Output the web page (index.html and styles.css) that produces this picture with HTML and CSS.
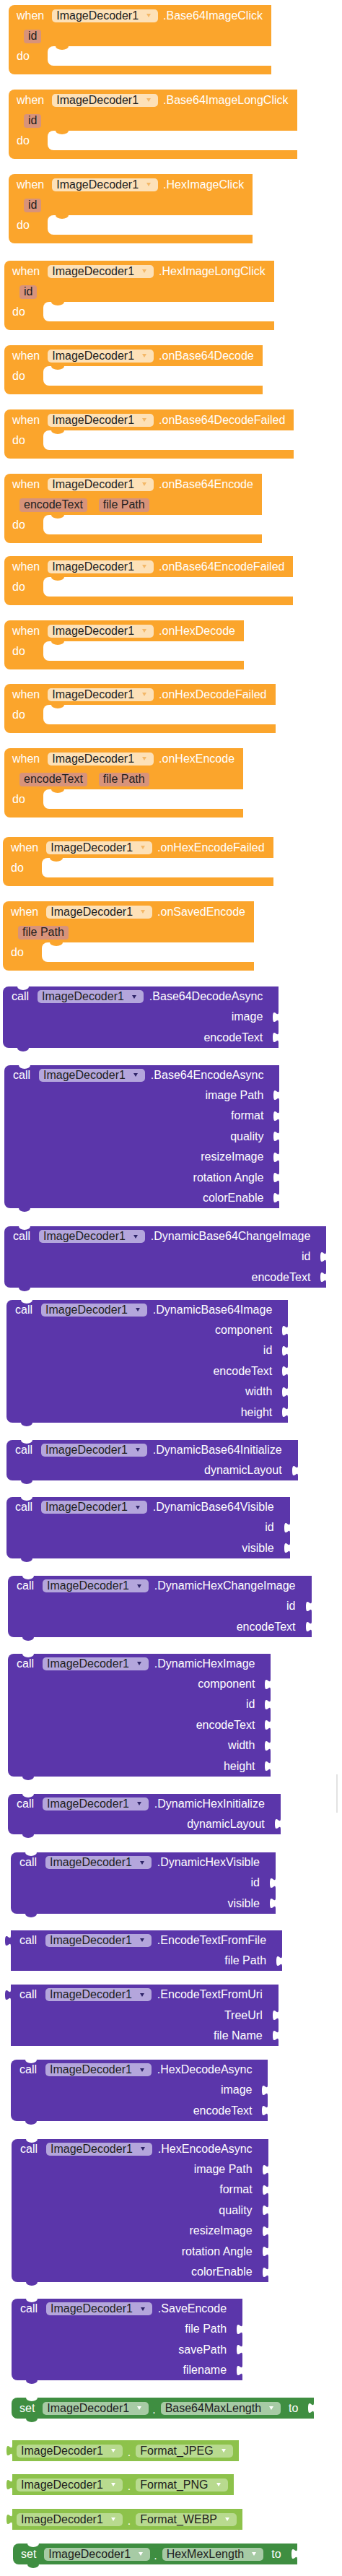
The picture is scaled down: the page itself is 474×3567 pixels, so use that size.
FILE: index.html
```html
<!DOCTYPE html>
<html lang="en">

<head>
    <meta name="viewport" content="width=device-width, initial-scale=1">
    <link rel="stylesheet" href="styles.css">
</head>

<body>

    <!-- shared puzzle tab shape for sockets and output plugs -->
    <svg class="defs" width="0" height="0">
        <defs>
            <path id="tab" d="M8,5 c0,10 -8,-8 -8,7.5 s8,-2.5 8,7.5 Z" />
        </defs>
    </svg>

    <!-- leftover workspace scrollbar sliver -->
    <div class="scroll-mark"></div>

    <div class="workspace">

        <!-- Event blocks -->
        <div class="block event x12">
            <div class="head">
                <div class="row"><span class="kw">when</span><span class="dd">ImageDecoder1</span><span class="name">.Base64ImageClick</span></div>
                <div class="params"><span class="param">id</span></div>
            </div>
            <div class="do-row"><span class="kw">do</span><div class="slot"></div></div>
            <div class="foot"></div>
        </div>

        <div class="block event x12">
            <div class="head">
                <div class="row"><span class="kw">when</span><span class="dd">ImageDecoder1</span><span class="name">.Base64ImageLongClick</span></div>
                <div class="params"><span class="param">id</span></div>
            </div>
            <div class="do-row"><span class="kw">do</span><div class="slot"></div></div>
            <div class="foot"></div>
        </div>

        <div class="block event x12">
            <div class="head">
                <div class="row"><span class="kw">when</span><span class="dd">ImageDecoder1</span><span class="name">.HexImageClick</span></div>
                <div class="params"><span class="param">id</span></div>
            </div>
            <div class="do-row"><span class="kw">do</span><div class="slot"></div></div>
            <div class="foot"></div>
        </div>

        <div class="block event x6 g24">
            <div class="head">
                <div class="row"><span class="kw">when</span><span class="dd">ImageDecoder1</span><span class="name">.HexImageLongClick</span></div>
                <div class="params"><span class="param">id</span></div>
            </div>
            <div class="do-row"><span class="kw">do</span><div class="slot"></div></div>
            <div class="foot"></div>
        </div>

        <div class="block event x6">
            <div class="head">
                <div class="row"><span class="kw">when</span><span class="dd">ImageDecoder1</span><span class="name">.onBase64Decode</span></div>
            </div>
            <div class="do-row"><span class="kw">do</span><div class="slot"></div></div>
            <div class="foot"></div>
        </div>

        <div class="block event x6">
            <div class="head">
                <div class="row"><span class="kw">when</span><span class="dd">ImageDecoder1</span><span class="name">.onBase64DecodeFailed</span></div>
            </div>
            <div class="do-row"><span class="kw">do</span><div class="slot"></div></div>
            <div class="foot"></div>
        </div>

        <div class="block event x6">
            <div class="head">
                <div class="row"><span class="kw">when</span><span class="dd">ImageDecoder1</span><span class="name">.onBase64Encode</span></div>
                <div class="params"><span class="param">encodeText</span><span class="param">file Path</span></div>
            </div>
            <div class="do-row"><span class="kw">do</span><div class="slot"></div></div>
            <div class="foot"></div>
        </div>

        <div class="block event x6 g18">
            <div class="head">
                <div class="row"><span class="kw">when</span><span class="dd">ImageDecoder1</span><span class="name">.onBase64EncodeFailed</span></div>
            </div>
            <div class="do-row"><span class="kw">do</span><div class="slot"></div></div>
            <div class="foot"></div>
        </div>

        <div class="block event x6">
            <div class="head">
                <div class="row"><span class="kw">when</span><span class="dd">ImageDecoder1</span><span class="name">.onHexDecode</span></div>
            </div>
            <div class="do-row"><span class="kw">do</span><div class="slot"></div></div>
            <div class="foot"></div>
        </div>

        <div class="block event x6 g20">
            <div class="head">
                <div class="row"><span class="kw">when</span><span class="dd">ImageDecoder1</span><span class="name">.onHexDecodeFailed</span></div>
            </div>
            <div class="do-row"><span class="kw">do</span><div class="slot"></div></div>
            <div class="foot"></div>
        </div>

        <div class="block event x6">
            <div class="head">
                <div class="row"><span class="kw">when</span><span class="dd">ImageDecoder1</span><span class="name">.onHexEncode</span></div>
                <div class="params"><span class="param">encodeText</span><span class="param">file Path</span></div>
            </div>
            <div class="do-row"><span class="kw">do</span><div class="slot"></div></div>
            <div class="foot"></div>
        </div>

        <div class="block event x4 g27">
            <div class="head">
                <div class="row"><span class="kw">when</span><span class="dd">ImageDecoder1</span><span class="name">.onHexEncodeFailed</span></div>
            </div>
            <div class="do-row"><span class="kw">do</span><div class="slot"></div></div>
            <div class="foot"></div>
        </div>

        <div class="block event x4">
            <div class="head">
                <div class="row"><span class="kw">when</span><span class="dd">ImageDecoder1</span><span class="name">.onSavedEncode</span></div>
                <div class="params"><span class="param">file Path</span></div>
            </div>
            <div class="do-row"><span class="kw">do</span><div class="slot"></div></div>
            <div class="foot"></div>
        </div>

        <!-- Method call blocks -->
        <div class="block call x4 g22">
            <div class="row"><span class="kw">call</span><span class="dd">ImageDecoder1</span><span class="name">.Base64DecodeAsync</span></div>
            <div class="input">image<svg class="sock"><use href="#tab" /></svg></div>
            <div class="input">encodeText<svg class="sock"><use href="#tab" /></svg></div>
        </div>

        <div class="block call x6 g24">
            <div class="row"><span class="kw">call</span><span class="dd">ImageDecoder1</span><span class="name">.Base64EncodeAsync</span></div>
            <div class="input">image Path<svg class="sock"><use href="#tab" /></svg></div>
            <div class="input">format<svg class="sock"><use href="#tab" /></svg></div>
            <div class="input">quality<svg class="sock"><use href="#tab" /></svg></div>
            <div class="input">resizeImage<svg class="sock"><use href="#tab" /></svg></div>
            <div class="input">rotation Angle<svg class="sock"><use href="#tab" /></svg></div>
            <div class="input">colorEnable<svg class="sock"><use href="#tab" /></svg></div>
        </div>

        <div class="block call x6 g25">
            <div class="row"><span class="kw">call</span><span class="dd">ImageDecoder1</span><span class="name">.DynamicBase64ChangeImage</span></div>
            <div class="input">id<svg class="sock"><use href="#tab" /></svg></div>
            <div class="input">encodeText<svg class="sock"><use href="#tab" /></svg></div>
        </div>

        <div class="block call x9 g17">
            <div class="row"><span class="kw">call</span><span class="dd">ImageDecoder1</span><span class="name">.DynamicBase64Image</span></div>
            <div class="input">component<svg class="sock"><use href="#tab" /></svg></div>
            <div class="input">id<svg class="sock"><use href="#tab" /></svg></div>
            <div class="input">encodeText<svg class="sock"><use href="#tab" /></svg></div>
            <div class="input">width<svg class="sock"><use href="#tab" /></svg></div>
            <div class="input">height<svg class="sock"><use href="#tab" /></svg></div>
        </div>

        <div class="block call x9 g24">
            <div class="row"><span class="kw">call</span><span class="dd">ImageDecoder1</span><span class="name">.DynamicBase64Initialize</span></div>
            <div class="input">dynamicLayout<svg class="sock"><use href="#tab" /></svg></div>
        </div>

        <div class="block call x9 g23">
            <div class="row"><span class="kw">call</span><span class="dd">ImageDecoder1</span><span class="name">.DynamicBase64Visible</span></div>
            <div class="input">id<svg class="sock"><use href="#tab" /></svg></div>
            <div class="input">visible<svg class="sock"><use href="#tab" /></svg></div>
        </div>

        <div class="block call x11 g24">
            <div class="row"><span class="kw">call</span><span class="dd">ImageDecoder1</span><span class="name">.DynamicHexChangeImage</span></div>
            <div class="input">id<svg class="sock"><use href="#tab" /></svg></div>
            <div class="input">encodeText<svg class="sock"><use href="#tab" /></svg></div>
        </div>

        <div class="block call x11 g23">
            <div class="row"><span class="kw">call</span><span class="dd">ImageDecoder1</span><span class="name">.DynamicHexImage</span></div>
            <div class="input">component<svg class="sock"><use href="#tab" /></svg></div>
            <div class="input">id<svg class="sock"><use href="#tab" /></svg></div>
            <div class="input">encodeText<svg class="sock"><use href="#tab" /></svg></div>
            <div class="input">width<svg class="sock"><use href="#tab" /></svg></div>
            <div class="input">height<svg class="sock"><use href="#tab" /></svg></div>
        </div>

        <div class="block call x11 g24">
            <div class="row"><span class="kw">call</span><span class="dd">ImageDecoder1</span><span class="name">.DynamicHexInitialize</span></div>
            <div class="input">dynamicLayout<svg class="sock"><use href="#tab" /></svg></div>
        </div>

        <div class="block call x15 g25">
            <div class="row"><span class="kw">call</span><span class="dd">ImageDecoder1</span><span class="name">.DynamicHexVisible</span></div>
            <div class="input">id<svg class="sock"><use href="#tab" /></svg></div>
            <div class="input">visible<svg class="sock"><use href="#tab" /></svg></div>
        </div>

        <!-- value returning calls have a plug on the left -->
        <div class="block call value x15 g23">
            <svg class="plug"><use href="#tab" /></svg>
            <div class="row"><span class="kw">call</span><span class="dd">ImageDecoder1</span><span class="name">.EncodeTextFromFile</span></div>
            <div class="input">file Path<svg class="sock"><use href="#tab" /></svg></div>
        </div>

        <div class="block call value x15 g19">
            <svg class="plug"><use href="#tab" /></svg>
            <div class="row"><span class="kw">call</span><span class="dd">ImageDecoder1</span><span class="name">.EncodeTextFromUri</span></div>
            <div class="input">TreeUrl<svg class="sock"><use href="#tab" /></svg></div>
            <div class="input">file Name<svg class="sock"><use href="#tab" /></svg></div>
        </div>

        <div class="block call x15 g19">
            <div class="row"><span class="kw">call</span><span class="dd">ImageDecoder1</span><span class="name">.HexDecodeAsync</span></div>
            <div class="input">image<svg class="sock"><use href="#tab" /></svg></div>
            <div class="input">encodeText<svg class="sock"><use href="#tab" /></svg></div>
        </div>

        <div class="block call x16 g25">
            <div class="row"><span class="kw">call</span><span class="dd">ImageDecoder1</span><span class="name">.HexEncodeAsync</span></div>
            <div class="input">image Path<svg class="sock"><use href="#tab" /></svg></div>
            <div class="input">format<svg class="sock"><use href="#tab" /></svg></div>
            <div class="input">quality<svg class="sock"><use href="#tab" /></svg></div>
            <div class="input">resizeImage<svg class="sock"><use href="#tab" /></svg></div>
            <div class="input">rotation Angle<svg class="sock"><use href="#tab" /></svg></div>
            <div class="input">colorEnable<svg class="sock"><use href="#tab" /></svg></div>
        </div>

        <div class="block call x16 g23">
            <div class="row"><span class="kw">call</span><span class="dd">ImageDecoder1</span><span class="name">.SaveEncode</span></div>
            <div class="input">file Path<svg class="sock"><use href="#tab" /></svg></div>
            <div class="input">savePath<svg class="sock"><use href="#tab" /></svg></div>
            <div class="input">filename<svg class="sock"><use href="#tab" /></svg></div>
        </div>

        <!-- Property setters and getters -->
        <div class="block setter x16 g24">
            <div class="row"><span class="kw">set</span><span class="dd">ImageDecoder1</span><span class="dot">.</span><span class="dd">Base64MaxLength</span><span class="to">to</span><svg class="sock"><use href="#tab" /></svg></div>
        </div>

        <div class="block getter x17 g30">
            <svg class="plug"><use href="#tab" /></svg>
            <div class="row"><span class="dd">ImageDecoder1</span><span class="dot">.</span><span class="dd">Format_JPEG</span></div>
        </div>

        <div class="block getter x17 g18">
            <svg class="plug"><use href="#tab" /></svg>
            <div class="row"><span class="dd">ImageDecoder1</span><span class="dot">.</span><span class="dd">Format_PNG</span></div>
        </div>

        <div class="block getter x17 g19">
            <svg class="plug"><use href="#tab" /></svg>
            <div class="row"><span class="dd">ImageDecoder1</span><span class="dot">.</span><span class="dd">Format_WEBP</span></div>
        </div>

        <div class="block setter x18 g19">
            <div class="row"><span class="kw">set</span><span class="dd">ImageDecoder1</span><span class="dot">.</span><span class="dd">HexMexLength</span><span class="to">to</span><svg class="sock"><use href="#tab" /></svg></div>
        </div>

    </div>

</body>

</html>
```

FILE: styles.css
```css
* {
    box-sizing: border-box;
}

body {
    position: relative;
    margin: 0;
    background-color: #ffffff;
    font-family: "Liberation Sans", Arial, Helvetica, sans-serif;
    font-size: 16px;
    color: #ffffff;
}

.defs {
    position: absolute;
    width: 0;
    height: 0;
}

/* thin grey sliver left over from the workspace scrollbar */
.scroll-mark {
    position: absolute;
    left: 466px;
    top: 2457px;
    width: 2px;
    height: 53px;
    background-color: #e2e2e2;
}

/* Blocks workspace, stacked top to bottom */
.workspace {
    display: flex;
    flex-direction: column;
    align-items: flex-start;
    padding: 7px 0 16px 0;
}

.block {
    position: relative;
    margin-top: 21px;
}

.workspace > .block:first-child {
    margin-top: 0;
}

/* offsets of single blocks on the canvas */
.x4 { margin-left: 4px; }
.x6 { margin-left: 6px; }
.x9 { margin-left: 9px; }
.x11 { margin-left: 11px; }
.x12 { margin-left: 12px; }
.x15 { margin-left: 15px; }
.x16 { margin-left: 16px; }
.x17 { margin-left: 17px; }
.x18 { margin-left: 18px; }

.g17 { margin-top: 17px; }
.g18 { margin-top: 18px; }
.g19 { margin-top: 19px; }
.g20 { margin-top: 20px; }
.g22 { margin-top: 22px; }
.g23 { margin-top: 23px; }
.g24 { margin-top: 24px; }
.g25 { margin-top: 25px; }
.g27 { margin-top: 27px; }
.g30 { margin-top: 30px; }

.row {
    display: flex;
    align-items: center;
    white-space: nowrap;
}

/* Dropdown field */
.dd {
    display: inline-flex;
    align-items: center;
    height: 18px;
    padding: 0 10px 0 6px;
    border-radius: 5px;
    color: #1e1e1e;
}

.dd::after {
    content: "";
    margin-left: 11px;
    border-left: 3.5px solid transparent;
    border-right: 3.5px solid transparent;
    border-top: 5px solid #ffffff;
}

.sock {
    position: absolute;
    right: 0;
    top: calc(50% - 12.5px);
    width: 8px;
    height: 20px;
    fill: #ffffff;
}

.plug {
    position: absolute;
    left: -8px;
    top: 2px;
    width: 8px;
    height: 20px;
}

/* ---------- event handlers ---------- */
.event {
    display: flex;
    flex-direction: column;
}

.event .head {
    background-color: #fba52c;
    border-radius: 8px 0 0 0;
    padding-right: 12px;
}

.event .row {
    height: 29px;
    padding-left: 11px;
}

.event .kw {
    margin-right: 11px;
}

.event .dd {
    background-color: #fde1b8;
}

.event .dd::after {
    border-top-color: #f4b868;
}

.event .name {
    margin-left: 7px;
}

.params {
    display: flex;
    align-items: center;
    gap: 16px;
    height: 28px;
    padding-left: 21px;
}

.param {
    display: inline-flex;
    align-items: center;
    height: 19px;
    padding: 0 6px;
    border-radius: 4px;
    background-color: #d8937a;
    color: #1e1e1e;
}

.do-row {
    display: flex;
    height: 27px;
    background-color: #fba52c;
}

.do-row .kw {
    display: flex;
    align-items: center;
    width: 43px;
    padding-left: 11px;
}

.slot {
    position: relative;
    flex: 1;
    background-color: #ffffff;
    border-radius: 8px 0 0 8px;
}

.slot::before {
    content: "";
    position: absolute;
    left: 11px;
    top: 0;
    width: 18px;
    height: 5px;
    background-color: #fba52c;
    border-radius: 0 0 9px 9px / 0 0 5px 5px;
}

.foot {
    height: 12px;
    background-color: #fba52c;
    border-radius: 0 0 0 8px;
}

/* ---------- method calls ---------- */
.call {
    display: flex;
    flex-direction: column;
    background-color: #5b36aa;
    border-radius: 8px 0 0 8px;
}

.call .row {
    height: 28px;
    padding: 0 22px 0 12px;
}

.call .kw {
    margin-right: 12px;
}

.call .dd {
    background-color: #b4a6dc;
}

.call .dd::after {
    border-top-color: #2f2568;
}

.call .name {
    margin-left: 8px;
}

.input {
    position: relative;
    display: flex;
    align-items: center;
    justify-content: flex-end;
    height: 28.4px;
    padding-right: 22px;
    white-space: nowrap;
}

/* previous / next connection notches */
.call::before,
.setter::before {
    content: "";
    position: absolute;
    left: 20px;
    top: 0;
    width: 16px;
    height: 5px;
    background-color: #ffffff;
    border-radius: 0 0 8px 8px / 0 0 5px 5px;
}

.call::after,
.setter::after {
    content: "";
    position: absolute;
    left: 20px;
    top: 100%;
    width: 16px;
    height: 5px;
    background: inherit;
    border-radius: 0 0 8px 8px / 0 0 5px 5px;
}

.call.value {
    border-radius: 0;
}

.call.value::before,
.call.value::after {
    display: none;
}

.call .plug {
    fill: #5b36aa;
}

/* ---------- setters / getters ---------- */
.setter {
    background-color: #3f8e41;
    border-radius: 8px 0 0 8px;
}

.setter .row {
    position: relative;
    height: 29px;
    padding: 0 22px 0 11px;
}

.setter .kw {
    margin-right: 11px;
}

.setter .dd {
    background-color: #a7cba5;
}

.dot {
    margin: 4px 7px 0 5px;
}

.setter .to {
    margin-left: 11px;
}

.getter {
    background-color: #8dc24b;
}

.getter .row {
    height: 29px;
    padding: 0 8px 0 6px;
}

.getter .dd {
    background-color: #b8da8f;
}

.getter .dot {
    margin: 4px 7px 0 7px;
}

.getter .plug {
    fill: #8dc24b;
}
```
